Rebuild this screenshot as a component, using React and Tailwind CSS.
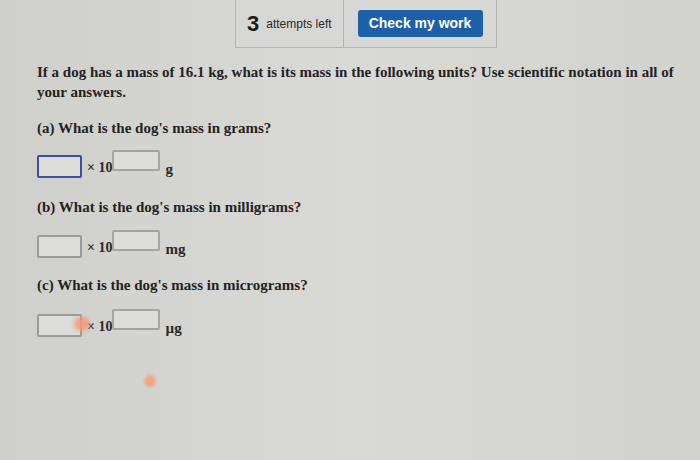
import React from 'react'

const serif = { fontFamily: '"Liberation Serif", "Times New Roman", serif' }

function Answer({ unit, focused }) {
  return (
    <div className="flex items-end h-[24px]">
      <div
        className={
          'w-[45px] h-[23px] rounded-[2px] bg-[#dcdcd9] border-2 ' +
          (focused ? 'border-[#3c4ea0]' : 'border-[#9a9a98]')
        }
      />
      <span className="ml-[5px] mb-[3px] text-[14px] font-bold text-[#2a2a2a] leading-none" style={serif}>
        × 10
      </span>
      <div className="self-start -mt-[4px] w-[48px] h-[21px] rounded-[2px] bg-[#dcdcd9] border-2 border-[#a3a3a1]" />
      <span className="ml-[5px] mb-[1px] text-[15px] font-bold text-[#2a2a2a] leading-none" style={serif}>
        {unit}
      </span>
    </div>
  )
}

export default function App() {
  return (
    <div className="relative w-[700px] h-[460px] overflow-hidden bg-gradient-to-r from-[#cfcfcc] via-[#d9d9d6] to-[#d2d2cf]">
      {/* Top bar */}
      <div className="flex h-[48px]">
        <div className="w-[235px]" />
        <div className="flex items-center gap-[7px] pl-[11px] w-[108px] border-l border-b border-[#b4b4b2] bg-[#d7d7d5]">
          <span className="text-[22px] font-bold text-[#1c1c1c] leading-none" style={{ fontFamily: '"Liberation Sans", Arial, sans-serif' }}>3</span>
          <span className="text-[12px] text-[#2a2a2a]" style={{ fontFamily: '"Liberation Sans", Arial, sans-serif' }}>attempts left</span>
        </div>
        <div className="flex items-center justify-center w-[154px] border-l border-r border-b border-[#b4b4b2] bg-[#d7d7d5]">
          <button
            className="w-[125px] h-[27px] rounded-[3px] bg-[#1e5fa9] text-white text-[14px] font-bold"
            style={{ fontFamily: '"Liberation Sans", Arial, sans-serif' }}
          >
            Check my work
          </button>
        </div>
      </div>

      {/* Question */}
      <div className="pl-[37px] pr-[18px] pt-[14px] text-[#232323]" style={serif}>
        <p className="text-[15px] font-bold leading-[20px]">
          If a dog has a mass of 16.1 kg, what is its mass in the following units? Use scientific notation in all of your answers.
        </p>

        <p className="mt-[16px] text-[15px] font-bold leading-[20px]">(a) What is the dog's mass in grams?</p>
        <div className="mt-[16px]">
          <Answer unit="g" focused />
        </div>

        <p className="mt-[19px] text-[15px] font-bold leading-[20px]">(b) What is the dog's mass in milligrams?</p>
        <div className="mt-[17px]">
          <Answer unit="mg" />
        </div>

        <p className="mt-[17px] text-[15px] font-bold leading-[20px]">(c) What is the dog's mass in micrograms?</p>
        <div className="mt-[18px]">
          <Answer unit="µg" />
        </div>
      </div>

      {/* camera glare */}
      <div className="absolute left-[74px] top-[317px] w-[16px] h-[14px] rounded-full bg-[#f59a7a] blur-[2px] opacity-90" />
      <div className="absolute left-[144px] top-[375px] w-[12px] h-[12px] rounded-full bg-[#f5a07e] blur-[1.5px] opacity-90" />
    </div>
  )
}
